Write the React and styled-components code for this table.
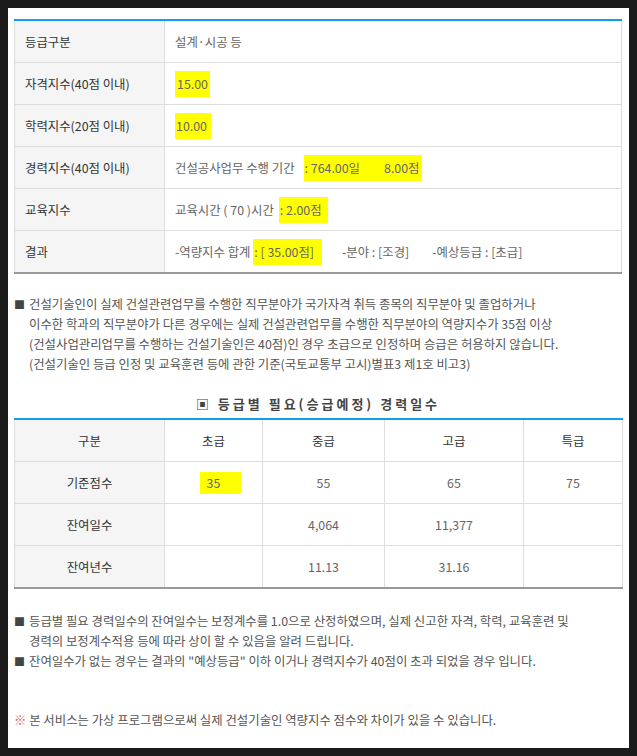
import React from "react";
import styled, { createGlobalStyle } from "styled-components";

const GlobalStyle = createGlobalStyle`
  html {
    background: #1b1b1b;
  }
  body {
    margin: 8px 8px 9px;
    background: #1b1b1b;
    font-family: "Noto Sans CJK KR", "Noto Sans", sans-serif;
    font-size: 12.4px;
    color: #555;
  }
`;

const Panel = styled.div`
  background: #fff;
  padding: 11px 7px 18px 6px;
`;

const Table = styled.table`
  width: 608px;
  border-collapse: collapse;
  table-layout: fixed;
  border-top: 2px solid #0f9fec;
  border-bottom: 2px solid #999;
  td {
    height: 41px;
    border: 1px solid #ddd;
    padding: 0 10px;
    color: #666;
    white-space: nowrap;
  }
  tr:first-child td {
    border-top: none;
  }
  tr:last-child td {
    border-bottom: none;
  }
`;

const Label = styled.td`
  && {
    background: #f5f5f5;
    color: #333;
  }
`;

const GradeTable = styled(Table)`
  td {
    text-align: center;
    padding: 0;
  }
`;

const HeadCell = styled.td`
  && {
    color: #333;
  }
`;

const Marker = styled.span`
  background: #ffff00;
  padding: ${(p) => p.$pad || "4px 1px"};
  margin-left: ${(p) => p.$shift || "0"};
`;

const Gap = styled.span`
  display: inline-block;
  width: ${(p) => p.$w}px;
`;

const Notes = styled.div`
  margin-top: ${(p) => p.$top}px;
  line-height: 20px;
  color: #555;
`;

const Note = styled.div`
  display: flex;
  white-space: nowrap;
`;

const Bullet = styled.span`
  width: 15px;
  flex: none;
  color: #444;
  font-size: 11px;
`;

const Title = styled.h3`
  margin: 20px 0 4px;
  text-align: center;
  font-size: 13px;
  line-height: 20px;
  font-weight: 700;
  letter-spacing: 3px;
  color: #444;
`;

const Disclaimer = styled.p`
  margin: 39px 0 0;
  line-height: 20px;
  color: #555;
  span {
    color: #e05a6a;
  }
`;

const infoRows = [
  { label: "등급구분", value: "설계·시공 등" },
  { label: "자격지수(40점 이내)", value: <Marker $pad="4px 2px">15.00</Marker> },
  { label: "학력지수(20점 이내)", value: <Marker $pad="4px 4px 4px 1px">10.00</Marker> },
  {
    label: "경력지수(40점 이내)",
    value: (
      <>
        건설공사업무 수행 기간<Gap $w={9} />
        <Marker $pad="4px 3px 4px 1px">: 764.00일<Gap $w={24} />8.00점</Marker>
      </>
    ),
  },
  {
    label: "교육지수",
    value: (
      <>
        교육시간 ( 70 )시간<Gap $w={5} />
        <Marker $pad="4px 6px 4px 1px">: 2.00점</Marker>
      </>
    ),
  },
  {
    label: "결과",
    value: (
      <>
        -역량지수 합계 <Marker $pad="4px 8px 4px 1px">: [ 35.00점]</Marker>
        <Gap $w={20} />-분야 : [조경]<Gap $w={23} />-예상등급 : [초급]
      </>
    ),
  },
];

const grades = ["초급", "중급", "고급", "특급"];
const gradeRows = [
  { label: "기준점수", values: [<Marker $pad="2px 21px 2px 7px" $shift="14px">35</Marker>, "55", "65", "75"] },
  { label: "잔여일수", values: ["", "4,064", "11,377", ""] },
  { label: "잔여년수", values: ["", "11.13", "31.16", ""] },
];

export default function App() {
  return (
    <>
      <GlobalStyle />
      <Panel>
        <Table>
          <colgroup>
            <col width="150" />
            <col />
          </colgroup>
          <tbody>
            {infoRows.map((r) => (
              <tr key={r.label}>
                <Label>{r.label}</Label>
                <td>{r.value}</td>
              </tr>
            ))}
          </tbody>
        </Table>

        <Notes $top={20}>
          <Note>
            <Bullet>■</Bullet>
            <div>
              건설기술인이 실제 건설관련업무를 수행한 직무분야가 국가자격 취득 종목의 직무분야 및 졸업하거나
              <br />
              이수한 학과의 직무분야가 다른 경우에는 실제 건설관련업무를 수행한 직무분야의 역량지수가 35점 이상
              <br />
              (건설사업관리업무를 수행하는 건설기술인은 40점)인 경우 초급으로 인정하며 승급은 허용하지 않습니다.
              <br />
              (건설기술인 등급 인정 및 교육훈련 등에 관한 기준(국토교통부 고시)별표3 제1호 비고3)
            </div>
          </Note>
        </Notes>

        <Title>▣ 등급별 필요(승급예정) 경력일수</Title>

        <GradeTable>
          <colgroup>
            <col width="150" />
            <col width="98" />
            <col width="122" />
            <col width="139" />
            <col width="99" />
          </colgroup>
          <tbody>
            <tr>
              <Label>구분</Label>
              {grades.map((g) => (
                <HeadCell key={g}>{g}</HeadCell>
              ))}
            </tr>
            {gradeRows.map((r) => (
              <tr key={r.label}>
                <Label>{r.label}</Label>
                {r.values.map((v, i) => (
                  <td key={i}>{v}</td>
                ))}
              </tr>
            ))}
          </tbody>
        </GradeTable>

        <Notes $top={22}>
          <Note>
            <Bullet>■</Bullet>
            <div>
              등급별 필요 경력일수의 잔여일수는 보정계수를 1.0으로 산정하였으며, 실제 신고한 자격, 학력, 교육훈련 및
              <br />
              경력의 보정계수적용 등에 따라 상이 할 수 있음을 알려 드립니다.
            </div>
          </Note>
          <Note>
            <Bullet>■</Bullet>
            <div>잔여일수가 없는 경우는 결과의 "예상등급" 이하 이거나 경력지수가 40점이 초과 되었을 경우 입니다.</div>
          </Note>
        </Notes>

        <Disclaimer>
          <span>※</span> 본 서비스는 가상 프로그램으로써 실제 건설기술인 역량지수 점수와 차이가 있을 수 있습니다.
        </Disclaimer>
      </Panel>
    </>
  );
}
